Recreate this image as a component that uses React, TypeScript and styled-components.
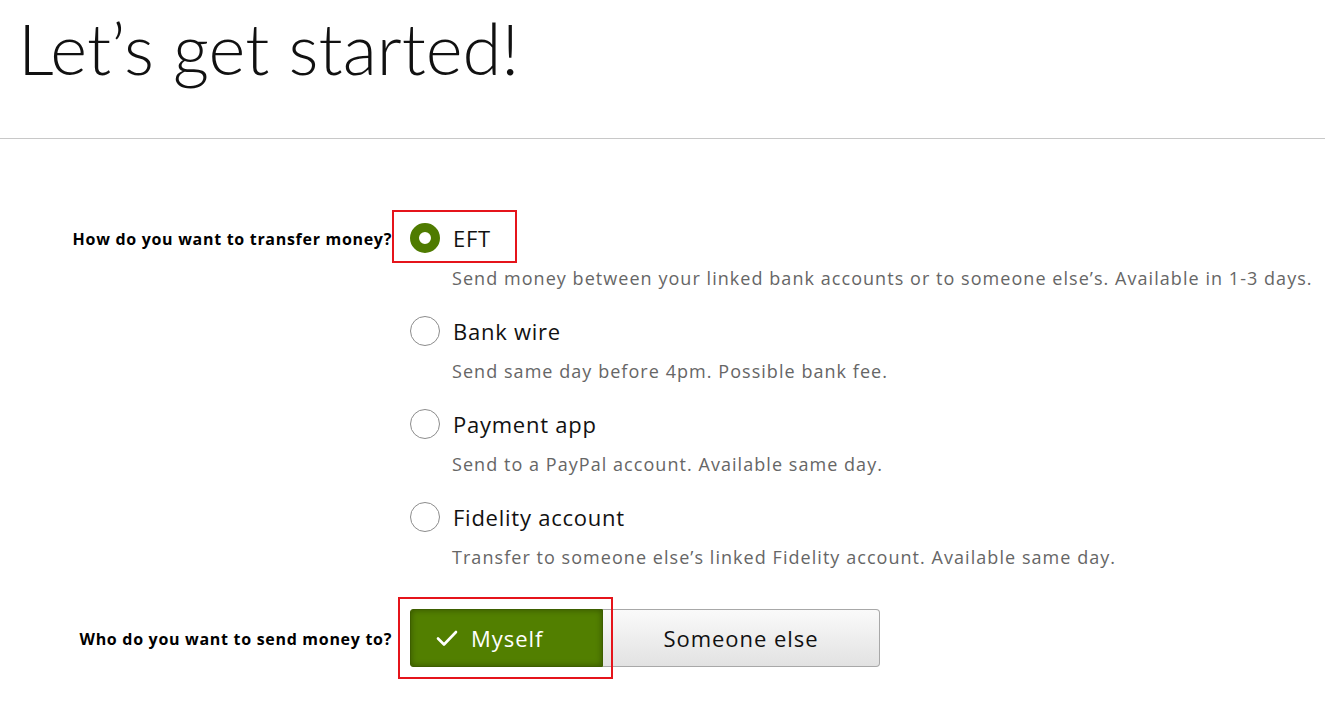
import styled, { createGlobalStyle } from 'styled-components';

const GlobalStyle = createGlobalStyle`
  html, body {
    margin: 0;
    padding: 0;
    background: #fff;
    font-family: "Open Sans", Lato, Arial, sans-serif;
    color: #000;
  }
`;

const Header = styled.header`
  padding: 6px 0 0 18px;
  height: 132px;
  border-bottom: 1px solid #c8c8c8;
`;

const Title = styled.h1`
  margin: 0;
  font-family: Lato, sans-serif;
  font-weight: 300;
  font-size: 70.5px;
  line-height: 84px;
  color: #111;
`;

const Form = styled.form`
  display: flex;
  flex-direction: column;
  gap: 40px;
  padding: 84px 0 40px;
`;

const Field = styled.div`
  display: grid;
  grid-template-columns: 392px 1fr;
  column-gap: 18px;
  align-items: start;
`;

const Label = styled.div<{ $height: number }>`
  text-align: right;
  font-size: 16px;
  font-weight: 700;
  letter-spacing: 0.7px;
  line-height: ${(p) => p.$height + 3}px;
  color: #000;
`;

const Options = styled.div`
  display: flex;
  flex-direction: column;
  gap: 26px;
`;

const Option = styled.div`
  display: flex;
  flex-direction: column;
  gap: 13px;
`;

const Highlight = styled.span`
  position: relative;
  display: inline-flex;

  &::after {
    content: '';
    position: absolute;
    top: -12px;
    left: -12px;
    right: -10px;
    bottom: -12px;
    border: 2px solid #e5141b;
    pointer-events: none;
  }
`;

const OptionHead = styled.label<{ $highlight?: boolean }>`
  position: relative;
  display: inline-flex;
  align-items: center;
  gap: 13px;
  height: 30px;
  align-self: flex-start;
  font-size: 22px;
  letter-spacing: 0.75px;
  color: #111;

  ${(p) =>
    p.$highlight &&
    `
    &::after {
      content: '';
      position: absolute;
      top: -13px;
      left: -18px;
      right: -26px;
      bottom: -10px;
      border: 2px solid #e5141b;
      pointer-events: none;
    }
  `}
`;

const Radio = styled.span<{ $checked?: boolean }>`
  box-sizing: border-box;
  width: 30px;
  height: 30px;
  border-radius: 50%;
  flex: none;
  border: ${(p) => (p.$checked ? '9px solid #4f7b00' : '1.5px solid #8c8c8c')};
  background: #fff;
`;

const Desc = styled.div`
  padding-left: 42px;
  font-size: 18px;
  letter-spacing: 1.05px;
  line-height: 24px;
  color: #666;
`;

const Segmented = styled.div`
  display: flex;
`;

const SegButton = styled.button<{ $active?: boolean; $width: number }>`
  box-sizing: border-box;
  width: ${(p) => p.$width}px;
  height: 58px;
  display: flex;
  align-items: center;
  justify-content: ${(p) => (p.$active ? 'flex-start' : 'center')};
  gap: 13px;
  padding: ${(p) => (p.$active ? '0 0 0 25px' : '0')};
  font-family: inherit;
  font-size: 22px;
  letter-spacing: 0.95px;
  cursor: pointer;
  ${(p) =>
    p.$active
      ? `
    color: #fff;
    background: #527f00;
    border: 1px solid #3d5e00;
    border-radius: 3px 0 0 3px;
    box-shadow: inset 0 0 6px rgba(0, 0, 0, 0.35);
  `
      : `
    color: #111;
    background: linear-gradient(#fafafa, #e2e2e2);
    border: 1px solid #a8a8a8;
    border-left: none;
    border-radius: 0 4px 4px 0;
  `}
`;

const Check = () => (
  <svg width="22" height="18" viewBox="0 0 22 18" fill="none">
    <path d="M2 9.5l6 6L20 3" stroke="#fff" strokeWidth="2.6" strokeLinecap="round" strokeLinejoin="round" />
  </svg>
);

const options = [
  { title: 'EFT', desc: 'Send money between your linked bank accounts or to someone else\u2019s. Available in 1-3 days.' },
  { title: 'Bank wire', desc: 'Send same day before 4pm. Possible bank fee.' },
  { title: 'Payment app', desc: 'Send to a PayPal account. Available same day.' },
  { title: 'Fidelity account', desc: 'Transfer to someone else\u2019s linked Fidelity account. Available same day.' },
];

export default function App() {
  return (
    <>
      <GlobalStyle />
      <Header>
        <Title>Let’s get started!</Title>
      </Header>
      <Form>
        <Field>
          <Label $height={30}>How do you want to transfer money?</Label>
          <Options>
            {options.map((o, i) => (
              <Option key={o.title}>
                <OptionHead $highlight={i === 0}>
                  <Radio $checked={i === 0} />
                  {o.title}
                </OptionHead>
                <Desc>{o.desc}</Desc>
              </Option>
            ))}
          </Options>
        </Field>
        <Field>
          <Label $height={58}>Who do you want to send money to?</Label>
          <Segmented>
            <Highlight>
              <SegButton type="button" $active $width={193}>
                <Check />
                Myself
              </SegButton>
            </Highlight>
            <SegButton type="button" $width={277}>
              Someone else
            </SegButton>
          </Segmented>
        </Field>
      </Form>
    </>
  );
}
